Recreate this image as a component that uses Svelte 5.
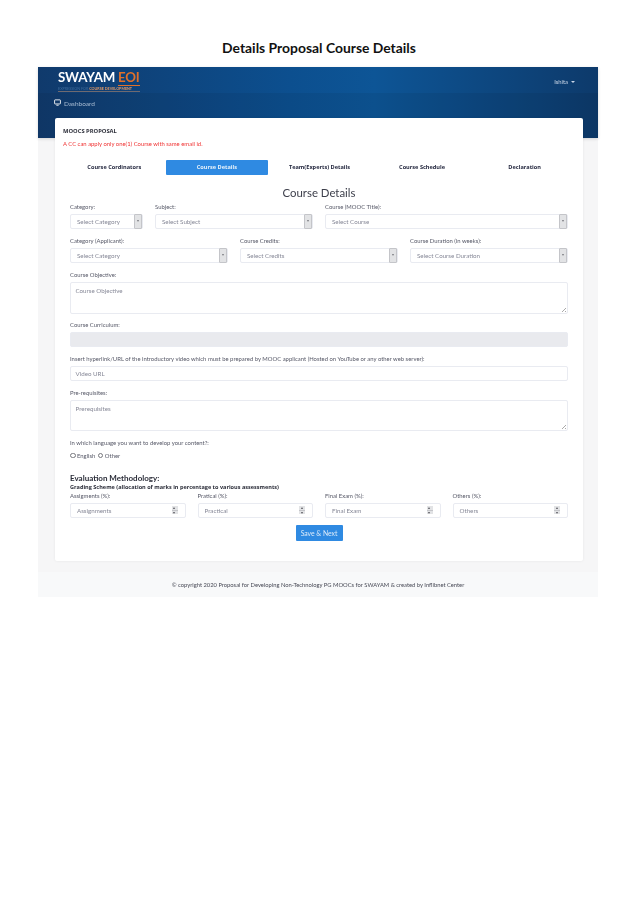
<script>
  const tabs = [
    { label: "Course Cordinators" },
    { label: "Course Details", active: true },
    { label: "Team(Experts) Details" },
    { label: "Course Schedule" },
    { label: "Declaration" },
  ];

  const selectRows = [
    [
      { label: "Category:", value: "Select Category", span: 2 },
      { label: "Subject:", value: "Select Subject", span: 4 },
      { label: "Course (MOOC Title):", value: "Select Course", span: 6 },
    ],
    [
      { label: "Category (Applicant):", value: "Select Category", span: 4 },
      { label: "Course Credits:", value: "Select Credits", span: 4 },
      { label: "Course Duration (in weeks):", value: "Select Course Duration", span: 4 },
    ],
  ];

  const marks = [
    { label: "Assigments (%):", value: "Assignments" },
    { label: "Pratical (%):", value: "Practical" },
    { label: "Final Exam (%):", value: "Final Exam" },
    { label: "Others (%):", value: "Others" },
  ];
</script>

<main class="page">
  <h1>Details Proposal Course Details</h1>

  <div class="shell">
    <header class="banner">
      <div class="topbar">
        <div class="logo">
          <div class="logo-name">SWAYAM <span>EOI</span></div>
          <div class="logo-sub">EXPRESSION FOR <span>COURSE DEVELOPMENT</span></div>
        </div>
        <div class="user">Ishita <i class="caret"></i></div>
      </div>
      <nav class="subnav">
        <svg viewBox="0 0 12 12" width="7" height="7" aria-hidden="true">
          <rect x="1" y="1.5" width="10" height="7" rx="0.8" fill="none" stroke="#fff" stroke-width="1.5" />
          <path d="M4 10.7h4" stroke="#fff" stroke-width="1.5" />
        </svg>
        Dashboard
      </nav>
    </header>

    <section class="card">
      <h2>MOOCS PROPOSAL</h2>
      <p class="warn">A CC can apply only one(1) Course with same email id.</p>

      <div class="tabs">
        {#each tabs as tab}
          <div class="tab" class:active={tab.active}>{tab.label}</div>
        {/each}
      </div>

      <h3>Course Details</h3>

      <form class="form">
        {#each selectRows as row}
          <div class="grid">
            {#each row as field}
              <div class="field" style="grid-column: span {field.span}">
                <span class="label">{field.label}</span>
                <div class="control select">
                  <span>{field.value}</span>
                  <i class="arrow"></i>
                </div>
              </div>
            {/each}
          </div>
        {/each}

        <div class="field">
          <span class="label">Course Objective:</span>
          <div class="control area">Course Objective<i class="grip"></i></div>
        </div>

        <div class="field">
          <span class="label">Course Curriculum:</span>
          <div class="control disabled"></div>
        </div>

        <div class="field">
          <span class="label">Insert hyperlink/URL of the introductory video which must be prepared by MOOC applicant (Hosted on YouTube or any other web server):</span>
          <div class="control input">Video URL</div>
        </div>

        <div class="field">
          <span class="label">Pre-requisites:</span>
          <div class="control area">Prerequisites<i class="grip"></i></div>
        </div>

        <div class="field lang">
          <span class="label">In which language you want to develop your content?:</span>
          <div class="radios">
            <i class="radio"></i><span>English</span>
            <i class="radio"></i><span>Other</span>
          </div>
        </div>

        <div class="eval">
          <h4>Evaluation Methodology:</h4>
          <h5>Grading Scheme (allocation of marks in percentage to various assessments)</h5>
          <div class="grid">
            {#each marks as mark}
              <div class="field" style="grid-column: span 3">
                <span class="label">{mark.label}</span>
                <div class="control select">
                  <span>{mark.value}</span>
                  <i class="spin"></i>
                </div>
              </div>
            {/each}
          </div>
        </div>

        <div class="actions">
          <button type="button">Save &amp; Next</button>
        </div>
      </form>
    </section>

    <footer>© copyright 2020 Proposal for Developing Non-Technology PG MOOCs for SWAYAM &amp; created by Inflibnet Center</footer>
  </div>
</main>

<style>
  :global(body) {
    margin: 0;
    background: #fff;
  }

  .page {
    height: 902px;
    overflow: hidden;
    padding-top: 38px;
    box-sizing: border-box;
    font-family: Lato, "Open Sans", sans-serif;
    font-size: 5.9px;
    color: #5a5c69;
  }

  h1 {
    margin: 0 0 9px;
    height: 20px;
    line-height: 20px;
    text-align: center;
    font-size: 13.9px;
    font-weight: 700;
    color: #111;
  }

  .shell {
    width: 560px;
    margin-left: 38px;
    background: #f6f6f7;
    filter: blur(0.25px);
  }

  .banner {
    height: 71px;
    background: linear-gradient(90deg, #103a6c 0%, #0c4f8f 45%, #0d5596 60%, #0d3a6b 100%);
    box-shadow: 0 1px 3px rgba(0, 0, 0, 0.15);
  }

  .topbar {
    height: 26px;
    display: flex;
    justify-content: space-between;
    padding: 2px 23px 0 20px;
    box-sizing: border-box;
  }

  .logo-name {
    font-size: 13.3px;
    line-height: 16px;
    font-weight: 700;
    color: #fff;
    letter-spacing: -0.2px;
  }

  .logo-name span {
    color: #e0702a;
    border-bottom: 1px solid #e0702a;
  }

  .logo-sub {
    width: 82px;
    margin-top: 1px;
    font-size: 3.7px;
    line-height: 5px;
    white-space: nowrap;
    color: #3f6c9c;
    border-bottom: 1px solid #6f6a70;
  }

  .logo-sub span {
    color: #e59a66;
    font-weight: 700;
  }

  .user {
    margin-top: 8px;
    color: #c9d6e6;
    display: flex;
    align-items: center;
    gap: 3px;
    height: 9px;
  }

  .caret {
    width: 0;
    height: 0;
    border: 2px solid transparent;
    border-top-color: #c9d6e6;
    border-bottom: 0;
  }

  .subnav {
    height: 45px;
    padding: 6px 0 0 16px;
    box-sizing: border-box;
    display: flex;
    align-items: flex-start;
    gap: 3px;
    line-height: 9px;
    font-size: 6.5px;
    color: #a9bdd4;
    background: rgba(0, 0, 0, 0.06);
  }

  .card {
    position: relative;
    width: 528px;
    height: 443px;
    margin: -20px 0 11px 17px;
    padding: 9px 8px 0;
    box-sizing: border-box;
    background: #fff;
    border-radius: 2px;
    box-shadow: 0 0 3px rgba(0, 0, 0, 0.07);
  }

  h2 {
    margin: 0;
    height: 9px;
    line-height: 9px;
    font-family: "Open Sans", sans-serif;
    font-size: 5.8px;
    font-weight: 700;
    color: #2d2f3a;
  }

  .warn {
    margin: 3px 0 0;
    height: 9px;
    line-height: 9px;
    color: #f03434;
  }

  .tabs {
    display: grid;
    grid-template-columns: repeat(5, 102.6px);
    margin-top: 11.5px;
  }

  .tab {
    height: 15.5px;
    line-height: 15.5px;
    text-align: center;
    font-family: "Open Sans", sans-serif;
    font-size: 5.6px;
    font-weight: 700;
    color: #24283f;
    border-radius: 1px;
  }

  .tab.active {
    background: #2f8ae2;
    color: #e6f1fb;
  }

  h3 {
    margin: 8.5px 0 0;
    height: 17px;
    line-height: 17px;
    text-align: center;
    font-size: 11.4px;
    font-weight: 400;
    color: #3c3e4a;
  }

  .form {
    margin: 1px 7px 0;
    display: flex;
    flex-direction: column;
    gap: 6.8px;
  }

  .grid {
    display: grid;
    grid-template-columns: repeat(12, 1fr);
    column-gap: 12px;
  }

  .field {
    display: flex;
    flex-direction: column;
    min-width: 0;
  }

  .label {
    height: 9px;
    line-height: 9px;
    margin-bottom: 3px;
    white-space: nowrap;
    color: #565867;
  }

  .control {
    position: relative;
    box-sizing: border-box;
    border: 1px solid #e9ebf1;
    border-radius: 2px;
    background: #fff;
    color: #858796;
    font-size: 6.2px;
  }

  .select {
    height: 15.5px;
    padding: 0 6px;
    display: flex;
    justify-content: space-between;
    align-items: center;
  }

  .arrow {
    position: absolute;
    top: -1px;
    right: 0;
    width: 8px;
    height: 15.5px;
    box-sizing: border-box;
    border: 1px solid #c4c5c9;
    border-radius: 1px;
    background: #e2e3e5;
  }

  .arrow::after {
    content: "";
    position: absolute;
    left: 1.5px;
    top: 5.5px;
    border: 1.5px solid transparent;
    border-top: 2px solid #77787e;
    border-bottom: 0;
  }

  .spin {
    width: 6px;
    height: 8px;
    margin-right: 1px;
    background:
      linear-gradient(#c4c5c9, #c4c5c9) center / 100% 1px no-repeat,
      #e2e3e5;
    position: relative;
  }

  .spin::before,
  .spin::after {
    content: "";
    position: absolute;
    left: 1.5px;
    border: 1.5px solid transparent;
  }

  .spin::before {
    top: 0.5px;
    border-bottom: 2px solid #55565c;
    border-top: 0;
  }

  .spin::after {
    bottom: 0.5px;
    border-top: 2px solid #55565c;
    border-bottom: 0;
  }

  .area {
    height: 31.5px;
    padding: 3px 4.5px;
    line-height: 9px;
  }

  .grip {
    position: absolute;
    right: 1px;
    bottom: 1px;
    width: 4px;
    height: 4px;
    background: linear-gradient(135deg, transparent 50%, #aaa 50%, #aaa 62%, transparent 62%, transparent 78%, #aaa 78%);
  }

  .disabled {
    height: 15px;
    background: #e9eaee;
  }

  .input {
    height: 15px;
    line-height: 13px;
    padding: 0 4.5px;
  }

  .radios {
    display: flex;
    align-items: center;
    height: 9px;
    gap: 1.5px;
    margin-top: 0.5px;
  }

  .radios span {
    margin-right: 1px;
    color: #565867;
  }

  .radio {
    width: 5.5px;
    height: 5.5px;
    box-sizing: border-box;
    border: 1px solid #77787e;
    border-radius: 50%;
  }

  .eval {
    margin-top: 6px;
  }

  h4 {
    margin: 0;
    height: 10px;
    line-height: 10px;
    font-size: 8px;
    font-weight: 700;
    color: #2a2c38;
  }

  h5 {
    margin: 0;
    height: 8px;
    line-height: 8px;
    font-family: "Open Sans", sans-serif;
    font-size: 5.55px;
    font-weight: 700;
    color: #2a2c38;
  }

  .actions {
    display: flex;
    justify-content: center;
  }

  button {
    width: 47px;
    height: 16px;
    padding: 0;
    border: 0;
    border-radius: 1px;
    background: #2f8ae2;
    color: #dcebfa;
    font: inherit;
    font-size: 6.8px;
  }

  footer {
    height: 25px;
    line-height: 25px;
    text-align: center;
    background: #f8f9fa;
    color: #474955;
    font-size: 5.8px;
  }
</style>
